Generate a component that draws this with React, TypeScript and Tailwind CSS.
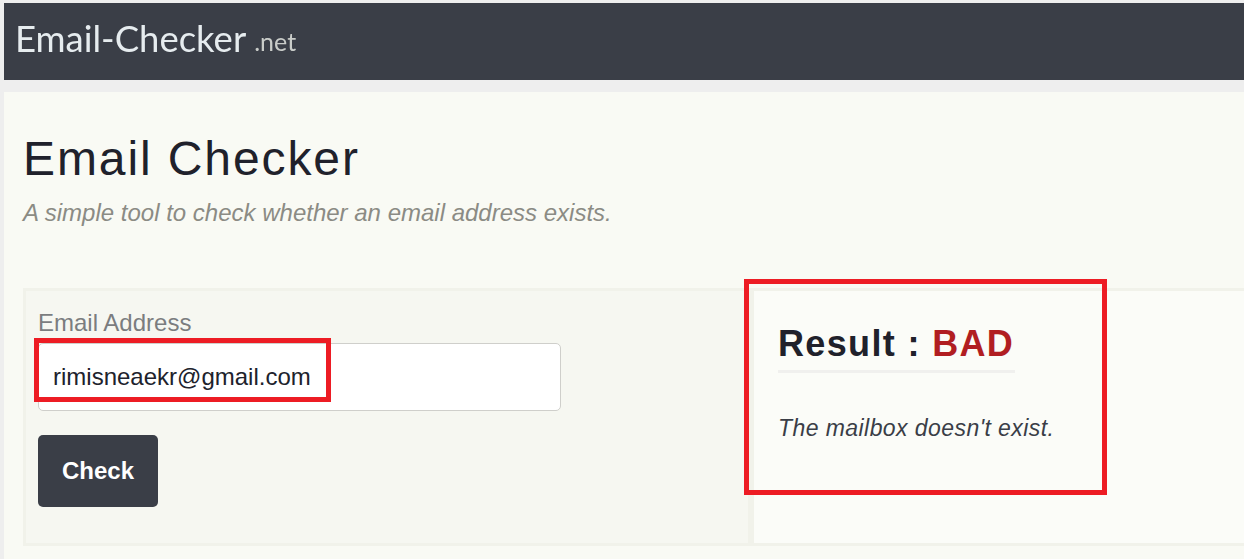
export default function App() {
    return (
        <div className="relative h-[559px] w-[1244px] overflow-hidden bg-[#eeeeee] pt-[3px] pl-[4px] font-['Liberation_Sans',sans-serif]">
            <header className="flex h-[77px] items-center bg-[#3a3e47] pb-[6px] pl-[11px]">
                <span className="font-['Lato',sans-serif] text-[36.5px] leading-none text-[#e6ecef] blur-[0.4px]">Email-Checker</span>
                <span className="mt-[6px] ml-[8px] font-['Lato',sans-serif] text-[25px] leading-none text-[#c9ccc9] blur-[0.3px]">.net</span>
            </header>

            <main className="mt-[12px] h-[467px] bg-[#f9faf4] pt-[39px] pl-[19px]">
                <h1 className="text-[48px] leading-[56px] tracking-[1.9px] text-[#20212b]">Email Checker</h1>
                <p className="mt-[12px] text-[24px] leading-[28px] text-[#8b8b84] italic">A simple tool to check whether an email address exists.</p>

                <section className="mt-[61px] flex h-[258px] border-[3px] border-r-0 border-[#f1f2ea]">
                    <div className="w-[722px] bg-[#f6f7f1] pt-[18px] pl-[12px]">
                        <label className="block text-[24px] leading-[28px] text-[#7b7d7f]">Email Address</label>
                        <div className="mt-[6px] flex h-[68px] w-[523px] items-center rounded-[5px] border border-[#cfcfcb] bg-white pl-[14px] text-[24px] text-[#20222c]">
                            rimisneaekr@gmail.com
                        </div>
                        <button className="mt-[24px] h-[72px] w-[120px] rounded-[5px] bg-[#3a3e47] text-[24px] font-bold text-white">Check</button>
                    </div>
                    <div className="flex-1 border-l-[6px] border-[#f1f2ea] bg-[#fbfcf8] pt-[32px] pl-[24px]">
                        <h2 className="w-[237px] border-b-[3px] border-[#f0f0ee] pb-[6px] text-[36px] leading-[41px] font-bold tracking-[1.35px] text-[#20212b]">
                            Result : <span className="text-[#b11e22]">BAD</span>
                        </h2>
                        <p className="mt-[41px] text-[23px] leading-[28px] tracking-[0.43px] text-[#3a3e47] italic">The mailbox doesn't exist.</p>
                    </div>
                </section>
            </main>

            <div className="absolute top-[338px] left-[34px] h-[64px] w-[297px] border-[5px] border-[#ed1c24]" />
            <div className="absolute top-[279px] left-[744px] h-[216px] w-[363px] border-[5px] border-[#ed1c24]" />
        </div>
    )
}
